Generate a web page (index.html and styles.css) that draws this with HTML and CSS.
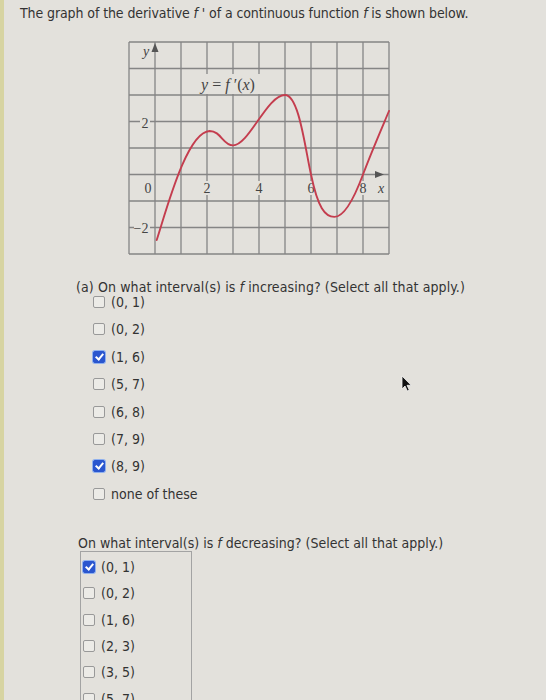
FILE: index.html
```html
<!DOCTYPE html>
<html>
<head>
<meta charset="utf-8">
<link rel="stylesheet" href="styles.css">
</head>
<body>
<div class="page">
  <p class="intro">The graph of the derivative <i>f</i> ' of a continuous function <i>f</i> is shown below.</p>
  <div class="graph">
    <svg width="270" height="226" viewBox="0 0 270 226" xmlns="http://www.w3.org/2000/svg">
      <g class="grid">
        <line x1="4" y1="4" x2="4" y2="216"/>
        <line x1="30" y1="4" x2="30" y2="216"/>
        <line x1="56" y1="4" x2="56" y2="216"/>
        <line x1="82" y1="4" x2="82" y2="216"/>
        <line x1="108" y1="4" x2="108" y2="216"/>
        <line x1="134" y1="4" x2="134" y2="216"/>
        <line x1="160" y1="4" x2="160" y2="216"/>
        <line x1="186" y1="4" x2="186" y2="216"/>
        <line x1="212" y1="4" x2="212" y2="216"/>
        <line x1="238" y1="4" x2="238" y2="216"/>
        <line x1="264" y1="4" x2="264" y2="216"/>
        <line x1="4" y1="4" x2="264" y2="4"/>
        <line x1="4" y1="30.5" x2="264" y2="30.5"/>
        <line x1="4" y1="57" x2="264" y2="57"/>
        <line x1="4" y1="83.5" x2="264" y2="83.5"/>
        <line x1="4" y1="110" x2="264" y2="110"/>
        <line x1="4" y1="136.5" x2="264" y2="136.5"/>
        <line x1="4" y1="163" x2="264" y2="163"/>
        <line x1="4" y1="189.5" x2="264" y2="189.5"/>
        <line x1="4" y1="216" x2="264" y2="216"/>
      </g>
      <g class="lblbg">
        <rect x="16" y="5" width="10" height="16"/>
        <rect x="70" y="36" width="66" height="20"/>
        <rect x="15" y="78" width="10" height="14"/>
        <rect x="9" y="183" width="16" height="14"/>
        <rect x="18" y="143" width="10" height="14"/>
        <rect x="77" y="143" width="10" height="14"/>
        <rect x="129" y="143" width="10" height="14"/>
        <rect x="181" y="143" width="10" height="14"/>
        <rect x="233" y="143" width="10" height="14"/>
        <rect x="251" y="143" width="10" height="14"/>
      </g>
      <polygon class="arrow" points="30,5 26.5,14 33.5,14"/>
      <polygon class="arrow" points="259,136.5 250,133 250,140"/>
      <g class="nums">
        <text x="21" y="18" class="it">y</text>
        <text x="103" y="51.5" class="big"><tspan class="it">y</tspan> = <tspan class="it">f</tspan> ′(<tspan class="it">x</tspan>)</text>
        <text x="20" y="89.5">2</text>
        <text x="16" y="194.5">−2</text>
        <text x="23" y="154.5">0</text>
        <text x="82" y="154.5">2</text>
        <text x="134" y="154.5">4</text>
        <text x="186" y="154.5">6</text>
        <text x="238" y="154.5">8</text>
        <text x="256" y="154.5" class="it">x</text>
      </g>
      <path class="curve" d="M31.7 202 C42 170, 62 94, 84.6 93 C96 93, 98 107.4, 108 107.4 C124 107.4, 142 57, 160 57 C174 57, 180 110, 186 136.5 C193 170, 200 178.9, 209.4 178.9 C220 178.9, 230 158, 238 136.5 C246 115, 256 92, 264 73"/>
    </svg>
  </div>

  <section class="q qa">
    <p class="prompt">(a) On what interval(s) is <i>f</i> increasing? (Select all that apply.)</p>
    <ul class="opts">
      <li><span class="cb"></span>(0, 1)</li>
      <li><span class="cb"></span>(0, 2)</li>
      <li><span class="cb on"></span>(1, 6)</li>
      <li><span class="cb"></span>(5, 7)</li>
      <li><span class="cb"></span>(6, 8)</li>
      <li><span class="cb"></span>(7, 9)</li>
      <li><span class="cb on"></span>(8, 9)</li>
      <li><span class="cb"></span>none of these</li>
    </ul>
  </section>

  <section class="q qb">
    <p class="prompt">On what interval(s) is <i>f</i> decreasing? (Select all that apply.)</p>
    <ul class="opts boxed">
      <li><span class="cb on"></span>(0, 1)</li>
      <li><span class="cb"></span>(0, 2)</li>
      <li><span class="cb"></span>(1, 6)</li>
      <li><span class="cb"></span>(2, 3)</li>
      <li><span class="cb"></span>(3, 5)</li>
      <li><span class="cb"></span>(5, 7)</li>
    </ul>
  </section>
</div>
<svg class="cursor" width="12" height="18" viewBox="0 0 12 18" xmlns="http://www.w3.org/2000/svg">
  <path d="M1 1 L1 14 L4 11 L6.3 16 L8.3 15.1 L6 10.3 L10.2 10.3 Z" fill="#111" stroke="#f4f4f4" stroke-width="0.8"/>
</svg>
</body>
</html>
```

FILE: styles.css
```css
html, body {
  margin: 0;
  padding: 0;
}
body {
  width: 546px;
  height: 700px;
  overflow: hidden;
  position: relative;
  background: linear-gradient(to right, #d7d4a2 0, #d7d4a2 4px, #e3e1dc 4px);
  font-family: "DejaVu Sans Condensed", "DejaVu Sans", sans-serif;
  font-stretch: semi-condensed;
  font-size: 14px;
  color: #333;
}
.page {
  padding-top: 4px;
}
.intro {
  margin: 0 0 0 20px;
  line-height: 18px;
  white-space: nowrap;
  letter-spacing: -0.1px;
}
.graph {
  margin: 16px 0 0 125px;
  height: 226px;
}
.graph svg {
  display: block;
}
.grid line {
  stroke: #858585;
  stroke-width: 1.3;
}
.lblbg rect {
  fill: #e3e1dc;
}
.arrow {
  fill: #555;
}
.nums text {
  font-family: "Liberation Serif", "DejaVu Serif", serif;
  font-size: 14px;
  fill: #444;
  text-anchor: middle;
}
.nums text.big {
  font-size: 16px;
}
.nums .it {
  font-style: italic;
}
.curve {
  fill: none;
  stroke: #c43d4e;
  stroke-width: 1.9;
  stroke-linecap: round;
}
.q {
  margin: 0;
}
.prompt {
  margin: 0;
  line-height: 16px;
  white-space: nowrap;
}
.qa {
  margin-top: 15px;
}
.qa .prompt {
  margin-left: 76px;
  letter-spacing: 0.1px;
}
.opts {
  list-style: none;
  margin: 0;
  padding: 0;
  display: flex;
  flex-direction: column;
}
.qa .opts {
  margin: -2px 0 0 93px;
  gap: 9.4px;
}
.opts li {
  display: flex;
  align-items: center;
  gap: 6px;
  line-height: 18px;
  height: 18px;
  white-space: nowrap;
}
.cb {
  box-sizing: border-box;
  width: 12px;
  height: 12px;
  border: 1px solid #999;
  border-radius: 2px;
  background: #ecebe7;
  flex: none;
  position: relative;
}
.cb.on {
  background: #2a56cf;
  border-color: #2a56cf;
  box-shadow: 0 0 0 1px #8fb0ee;
}
.cb.on::after {
  content: "";
  position: absolute;
  left: 3px;
  top: 0px;
  width: 3px;
  height: 6px;
  border: solid #fff;
  border-width: 0 2px 2px 0;
  transform: rotate(40deg);
}
.qb {
  margin-top: 32px;
}
.qb .prompt {
  margin-left: 78px;
}
.opts.boxed {
  margin-left: 80px;
  width: 112px;
  box-sizing: border-box;
  border: 1px solid #a3a3a3;
  border-bottom: none;
  padding: 6px 0 20px 2px;
  gap: 8.4px;
}
.cursor {
  position: absolute;
  left: 401px;
  top: 375px;
}
```
